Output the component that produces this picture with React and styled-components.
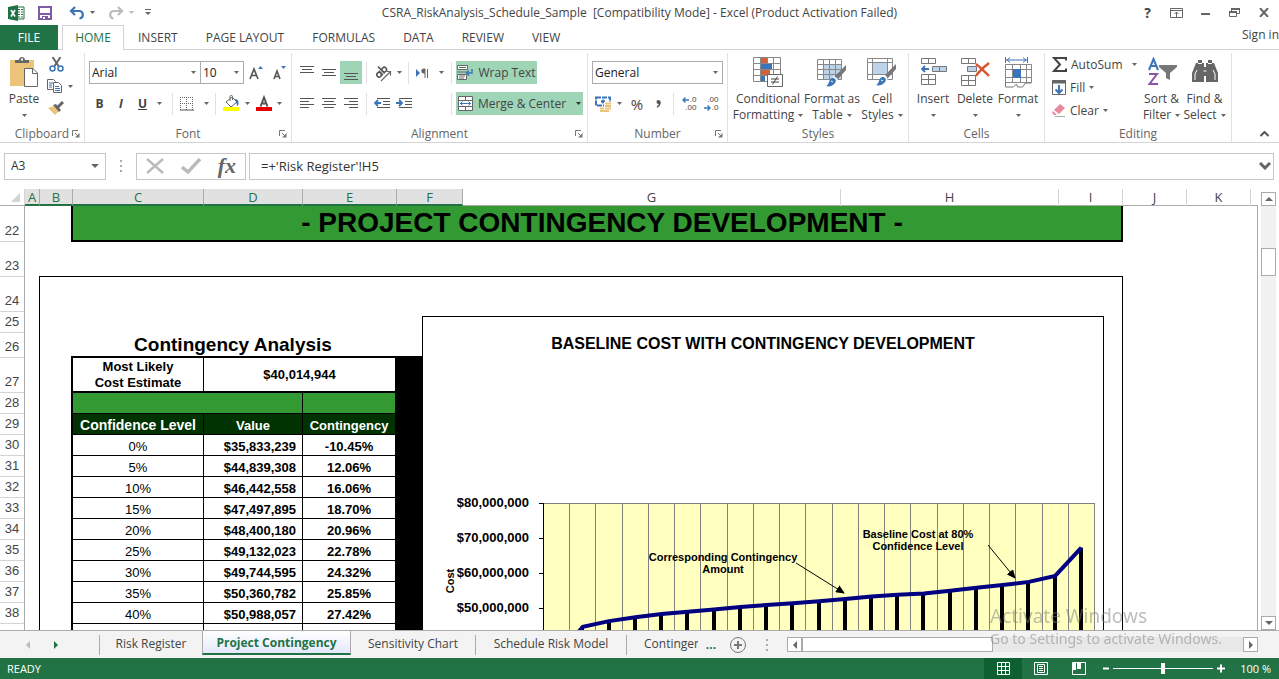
import React from 'react';
import styled, {createGlobalStyle, css} from 'styled-components';

const GlobalStyle = createGlobalStyle`
    * {
        box-sizing: border-box;
    }

    body {
        margin: 0;
        overflow: hidden;
        background: #fff;
        color: #444;
        font: 12px/16px "Open Sans", "Noto Sans", sans-serif;
    }

    button, input, select {
        margin: 0;
        padding: 0;
        border: 0;
        background: none;
        color: inherit;
        font: inherit;
    }

    svg {
        display: block;
        flex: none;
    }
`;

const Window = styled.div`
    display: flex;
    flex-direction: column;
    height: 100vh;
`;

/* ---------- title bar and tabs ---------- */

const TitleBar = styled.header`
    display: grid;
    grid-template-columns: 1fr auto 1fr;
    align-items: center;
    height: 25px;
`;

const QuickAccess = styled.div`
    display: flex;
    align-items: center;
    gap: 5px;
    padding-left: 8px;
`;

const Title = styled.h1`
    margin: 0;
    font-size: 12px;
    font-weight: normal;
    white-space: pre;
`;

const WindowButtons = styled.div`
    display: flex;
    justify-content: flex-end;
    padding-right: 1px;
`;

const ToolButton = styled.button`
    display: flex;
    align-items: center;
    justify-content: center;
    gap: 5px;
    flex: none;
    width: ${p => p.$width ? `${p.$width}px` : 'auto'};
    height: ${p => p.$short ? 22 : 23}px;
    background: ${p => p.$active ? '#9fd5b7' : 'transparent'};
    font-size: ${p => p.$size || 12}px;
    font-weight: ${p => p.$bold ? 'bold' : 'normal'};
    white-space: nowrap;
`;

const TabStrip = styled.nav`
    display: flex;
    height: 25px;
    border-bottom: 1px solid #d4d4d4;
`;

const RibbonTab = styled.button`
    height: 25px;
    padding: 0 14px;
    font-size: 12px;
    ${p => p.$file && css`
        width: 58px;
        margin-right: 4px;
        background: #217346;
        color: #fff;
    `}
    ${p => p.$active && css`
        width: 62px;
        padding: 0;
        border: 1px solid #d4d4d4;
        border-bottom: 0;
        background: #fff;
        color: #217346;
    `}
`;

const SignIn = styled.a`
    margin-left: auto;
    padding-top: 2px;
    color: #444;
    text-decoration: none;
`;

/* ---------- ribbon ---------- */

const Ribbon = styled.section`
    display: flex;
    height: 93px;
    padding-top: 3px;
    border-bottom: 1px solid #d4d4d4;
`;

const Group = styled.div`
    display: flex;
    flex-direction: column;
    flex: none;
    width: ${p => p.$width}px;
    border-right: 1px solid #e1e1e1;
`;

const GroupBody = styled.div`
    display: flex;
    flex: 1;
    align-items: flex-start;
    min-height: 0;
    padding: 0 4px;
`;

const GroupFooter = styled.div`
    display: grid;
    grid-template-columns: 12px 1fr 12px;
    align-items: center;
    height: 16px;
    color: #666;
    text-align: center;
`;

const Rows = styled.div`
    display: flex;
    flex-direction: column;
    gap: 8px;
    padding-top: 8px;
`;

const Row = styled.div`
    display: flex;
    align-items: center;
    height: 23px;
`;

const Divider = styled.span`
    width: 1px;
    height: 22px;
    margin: 0 4px;
    background: #e1e1e1;
`;

const Spacer = styled.span`
    width: ${p => p.$width}px;
`;

const Filler = styled.span`
    flex: 1;
`;

const Combo = styled.label`
    display: flex;
    align-items: center;
    width: ${p => p.$width}px;
    height: 23px;
    padding-right: 4px;
    border: 1px solid #ababab;
    color: #222;

    & + & {
        margin-left: -1px;
    }

    select {
        flex: 1;
        min-width: 0;
        padding-left: 2px;
        appearance: none;
    }
`;

const BigButton = styled.button`
    display: flex;
    flex-direction: column;
    align-items: center;
    flex: none;
    width: ${p => p.$width}px;
    padding-top: 4px;
    text-align: center;
    white-space: nowrap;
`;

const IconSlot = styled.span`
    display: flex;
    justify-content: center;
    height: 34px;
`;

const LabelLine = styled.span`
    display: flex;
    align-items: center;
    justify-content: center;
    gap: 4px;
    min-height: 16px;
`;

const SmallColumn = styled.div`
    display: flex;
    flex-direction: column;
    align-items: flex-start;
`;

const EditList = styled.div`
    display: flex;
    flex-direction: column;
    width: 88px;
    padding-left: 3px;
`;

const EditButton = styled.button`
    display: flex;
    align-items: center;
    gap: 4px;
    height: 23px;

    svg:nth-of-type(2) {
        margin-left: ${p => p.$split ? 'auto' : '0'};
    }
`;

const Collapse = styled.button`
    align-self: flex-end;
    margin: 0 10px 5px auto;
`;

/* ---------- formula bar ---------- */

const FormulaBar = styled.section`
    display: flex;
    align-items: center;
    height: 46px;
    padding: 0 5px 0 4px;
    color: #333;
`;

const NameBox = styled.label`
    display: flex;
    align-items: center;
    width: 102px;
    height: 27px;
    padding: 0 6px;
    border: 1px solid #c6c6c6;

    input {
        flex: 1;
        min-width: 0;
    }
`;

const FormulaButtons = styled.div`
    display: flex;
    align-items: center;
    justify-content: space-between;
    width: 110px;
    height: 27px;
    margin-right: 3px;
    padding: 0 9px;
    border: 1px solid #c6c6c6;
`;

const FormulaField = styled.label`
    display: flex;
    align-items: center;
    flex: 1;
    height: 27px;
    padding: 0 2px 0 11px;
    border: 1px solid #c6c6c6;
    font-size: 13px;

    input {
        flex: 1;
    }
`;

const Grip = styled.span`
    display: flex;
    flex-direction: column;
    align-items: center;
    gap: 3px;
    width: ${p => p.$width}px;

    i {
        width: 2px;
        height: 2px;
        background: #ababab;
    }
`;

/* ---------- worksheet ---------- */

const Workspace = styled.main`
    display: flex;
    flex: 1;
    min-height: 0;
`;

const SheetArea = styled.div`
    display: flex;
    flex-direction: column;
    flex: 1;
    min-width: 0;
    overflow: hidden;
`;

const ColumnHeaders = styled.div`
    display: flex;
    flex: none;
    height: 17px;
    border-bottom: 1px solid #ababab;
`;

const Corner = styled.div`
    display: flex;
    align-items: flex-end;
    justify-content: flex-end;
    flex: none;
    width: 25px;
    padding: 0 4px 3px 0;
    border-right: 1px solid #d4d4d4;
`;

const ColumnHeader = styled.div`
    flex: none;
    width: ${p => p.$width}px;
    height: 17px;
    border-right: 1px solid #d4d4d4;
    font-size: 13px;
    line-height: 16px;
    text-align: center;
    ${p => p.$selected && css`
        border-right-color: #ababab;
        border-bottom: 2px solid #217346;
        background: #e1e1e1;
        color: #217346;
    `}
`;

const SheetBody = styled.div`
    display: flex;
    flex: 1;
    min-height: 0;
    overflow: hidden;
    border-right: 1px solid #ababab;
`;

const RowHeaders = styled.div`
    flex: none;
    width: 25px;
    border-right: 1px solid #ababab;
`;

const RowHeader = styled.div`
    display: flex;
    align-items: flex-end;
    justify-content: center;
    height: ${p => p.$height}px;
    padding-bottom: 2px;
    border-bottom: 1px solid #d4d4d4;
    font-family: "Liberation Sans", Arial, sans-serif;
    font-size: 13px;
    line-height: 16px;
`;

const Cells = styled.div`
    flex: 1;
    min-width: 0;
    color: #000;
    font-family: "Liberation Sans", Arial, sans-serif;
`;

const Banner = styled.h2`
    width: 1052px;
    height: 36px;
    margin: 0 0 34px 46px;
    padding-left: 10px;
    border: 2px solid #000;
    border-top: 0;
    background: #339933;
    font-size: 28px;
    line-height: 34px;
    text-align: center;
`;

const Panel = styled.div`
    display: flex;
    align-items: flex-start;
    width: 1084px;
    height: 400px;
    margin-left: 14px;
    padding-left: 31px;
    border: 1px solid #000;
`;

const Analysis = styled.div`
    width: 324px;
    padding-top: 57px;

    h3 {
        margin: 0;
        font-size: 19px;
        line-height: 22px;
        text-align: center;
    }
`;

const DataTable = styled.table`
    width: 324px;
    border: solid #000;
    border-width: 2px 0 0 2px;
    border-spacing: 0;
    table-layout: fixed;
    font-size: 13px;
    line-height: 17px;

    th, td {
        height: 21px;
        padding: 2px 0 0;
        border-bottom: 1px solid #000;
        text-align: center;
        font-weight: bold;
    }

    th:not(:last-child), td:not(:last-child) {
        border-right: 1px solid #000;
    }
`;

const EstimateRow = styled.tr`
    line-height: 16px;

    th, td {
        height: 35px;
        padding: 0;
        border-bottom-width: 2px;
    }
`;

const GreenRow = styled.tr`
    background: #339933;
`;

const HeadRow = styled.tr`
    background: #003300;
    color: #fff;

    th:first-child {
        font-size: 14px;
    }
`;

const DataRow = styled.tr`
    td:first-child {
        font-weight: normal;
    }

    td:nth-child(2) {
        padding-right: 6px;
        text-align: right;
    }
`;

const BlackColumn = styled.div`
    width: 27px;
    height: 320px;
    margin-top: 79px;
    background: #000;
`;

const ChartFrame = styled.figure`
    width: 682px;
    height: 361px;
    margin: 39px 0 0;
    border: 1px solid #000;
`;

const ScrollColumn = styled.div`
    display: flex;
    flex-direction: column;
    width: 15px;
    margin: 3px 3px 0;
    background: #f1f1f1;
`;

const ScrollButton = styled.button`
    display: flex;
    align-items: center;
    justify-content: center;
    flex: none;
    width: 15px;
    height: 14px;
    border: 1px solid #ababab;
    background: #fff;
`;

const VerticalThumb = styled.div`
    width: 15px;
    height: 28px;
    margin: 42px 0 auto;
    border: 1px solid #ababab;
    background: #fff;
`;

/* ---------- sheet tabs and status bar ---------- */

const SheetTabs = styled.nav`
    display: flex;
    align-items: center;
    height: 28px;
    padding-right: 21px;
    border-top: 1px solid #ababab;
    background: #f3f3f3;
`;

const TabArrows = styled.div`
    display: flex;
    justify-content: space-between;
    width: 99px;
    padding: 0 39px 0 24px;
`;

const SheetTab = styled.button`
    flex: none;
    width: ${p => p.$width}px;
    height: 20px;
    overflow: hidden;
    padding-bottom: 2px;
    border-left: ${p => p.$line ? '1px solid #ababab' : '0'};
    white-space: nowrap;
    ${p => p.$active && css`
        align-self: flex-start;
        height: 24px;
        padding: 2px 0 0;
        border: solid #ababab;
        border-width: 0 1px;
        border-bottom: 2px solid #217346;
        background: linear-gradient(#fff, #e4e8fb);
        color: #217346;
        font-weight: bold;
    `}
    ${p => p.$clipped && css`
        padding-left: 17px;
        text-align: left;
    `}
`;

const MoreTabs = styled.button`
    width: 26px;
    color: #217346;
    font-weight: bold;
`;

const HorizontalScroll = styled.div`
    display: flex;
    flex: 1;
    height: 15px;
    background: #e8e8e8;

    ${ScrollButton} {
        height: 15px;
    }
`;

const HorizontalThumb = styled.div`
    width: 191px;
    margin-right: auto;
    border: 1px solid #ababab;
    background: #fff;
`;

const StatusBar = styled.footer`
    display: flex;
    align-items: center;
    height: 21px;
    padding: 0 8px 0 7px;
    background: #217346;
    color: #fff;
    font-size: 11px;
`;

const ViewButton = styled.button`
    display: flex;
    align-items: center;
    justify-content: center;
    width: 38px;
    height: 21px;
    background: ${p => p.$active ? '#0e5f32' : 'transparent'};
`;

const ZoomSlider = styled.input`
    width: 100px;
    height: 16px;
    appearance: none;

    &::-webkit-slider-runnable-track {
        height: 1px;
        background: #fff;
    }

    &::-webkit-slider-thumb {
        width: 4px;
        height: 11px;
        margin-top: -5px;
        appearance: none;
        background: #fff;
    }
`;

const ZoomValue = styled.span`
    margin-left: 12px;
    white-space: nowrap;
`;

const ActivateNotice = styled.aside`
    position: fixed;
    left: calc(100% - 289px);
    bottom: 31px;
    color: rgba(125, 125, 125, 0.5);
    font-family: "Noto Sans", sans-serif;
    font-size: 14px;
    line-height: 18px;
    white-space: nowrap;
    pointer-events: none;

    strong {
        display: block;
        font-size: 19px;
        font-weight: normal;
        line-height: 28px;
    }
`;

/* ---------- icons ---------- */

const Icon = ({w = 16, h = 16, children}) => (
    <svg width={w} height={h} viewBox={`0 0 ${w} ${h}`} fill="none" aria-hidden="true">{children}</svg>
);

const Caret = ({color = '#666'}) => (
    <Icon w={5} h={3}><path d="M0 0h5L2.500 3z" fill={color}/></Icon>
);

const TriangleIcon = ({dir, color = '#666'}) => {
    const paths = {
        left: 'M6 0v8L2 4z',
        right: 'M2 0v8l4-4z',
        up: 'M0 6h8L4 2z',
        down: 'M0 2h8L4 6z',
    };
    return <Icon w={8} h={8}><path d={paths[dir]} fill={color}/></Icon>;
};

const ExcelIcon = () => (
    <Icon w={17} h={16}>
        <path d="M9 2h7v12H9z" fill="#fff" stroke="#217346"/>
        <path d="M10 4.500h2M13 4.500h2M10 7h2M13 7h2M10 9.500h2M13 9.500h2M10 12h2M13 12h2" stroke="#217346"/>
        <path d="M0 2l10-2v16L0 14z" fill="#217346"/>
        <path d="M3 5l4 6.500M7 5l-4 6.500" stroke="#fff" strokeWidth="1.600"/>
    </Icon>
);

const SaveIcon = () => (
    <Icon w={14} h={14}>
        <path d="M1 1h12v12H1z" stroke="#7d5ba6" strokeWidth="2"/>
        <path d="M2 7h10v2H2zM4 10h6v4H4z" fill="#7d5ba6"/>
        <path d="M5 11h2v2H5z" fill="#fff"/>
    </Icon>
);

const UndoIcon = ({color = '#3b74b9', flip}) => (
    <Icon w={16} h={14}>
        <g transform={flip ? 'matrix(-1 0 0 1 16 0)' : undefined} stroke={color} strokeWidth="2.200">
            <path d="M6 1L2 5l4 4"/>
            <path d="M2.500 5H10c5 0 5 7 .5 7.500"/>
        </g>
    </Icon>
);

const CustomizeIcon = () => (
    <Icon w={6} h={7}><path d="M0 .5h6" stroke="#666"/><path d="M0 3h6L3 6z" fill="#666"/></Icon>
);

const RibbonDisplayIcon = () => (
    <Icon w={13} h={10}>
        <path d="M.5.5h12v9H.5zM.5 2.500h12" stroke="#666"/>
        <path d="M6.500 9V4M4.500 6l2-2 2 2" stroke="#666"/>
    </Icon>
);

const MinimizeIcon = () => <Icon w={9} h={9}><path d="M0 6h9" stroke="#666" strokeWidth="2"/></Icon>;

const RestoreIcon = () => (
    <Icon w={11} h={10}>
        <path d="M2.500 3V.5h8v5H8" stroke="#666"/><path d="M2 1h9" stroke="#666" strokeWidth="2"/>
        <path d="M.5 3.500h7v5h-7z" stroke="#666"/><path d="M0 4h8" stroke="#666" strokeWidth="2"/>
    </Icon>
);

const CloseIcon = () => <Icon w={10} h={9}><path d="M1 0l8 9M9 0L1 9" stroke="#666" strokeWidth="2"/></Icon>;

const LaunchIcon = () => (
    <Icon w={8} h={8}>
        <path d="M.5 6V.5H6M3 3l3 3" stroke="#777"/><path d="M7.500 3v4.500H3z" fill="#777"/>
    </Icon>
);

const PasteIcon = () => (
    <Icon w={28} h={30}>
        <path d="M0 3h24v26H0z" fill="#ebc47a"/>
        <path d="M5 6V3h4c0-4 6-4 6 0h4v3z" fill="#666"/>
        <path d="M11 1.500h2v2h-2z" fill="#fff"/>
        <path d="M14.500 11.500H23l4.500 4.500v13.500h-13z" fill="#fff" stroke="#666"/>
        <path d="M22.500 12v4.500H27" stroke="#666"/>
    </Icon>
);

const CutIcon = () => (
    <Icon w={15} h={15}>
        <path d="M3.500 0l6 9M11.500 0l-6 9" stroke="#666" strokeWidth="2"/>
        <circle cx="3.500" cy="11.500" r="2.500" stroke="#3b74b9" strokeWidth="1.500"/>
        <circle cx="11.500" cy="11.500" r="2.500" stroke="#3b74b9" strokeWidth="1.500"/>
    </Icon>
);

const CopyIcon = () => (
    <Icon w={16} h={14}>
        <path d="M.5.500h6l2 2v8h-8z" fill="#fff" stroke="#666"/>
        <path d="M2 4h4M2 6h3M2 8h3" stroke="#3b74b9"/>
        <path d="M6.500 3.500h5l3 3v7h-8z" fill="#fff" stroke="#666"/>
        <path d="M8 7.500h4M8 9.500h5M8 11.500h5" stroke="#3b74b9"/>
    </Icon>
);

const PainterIcon = () => (
    <Icon w={16} h={14}>
        <path d="M0 7l6-2 5 5-4 4z" fill="#ebc47a"/>
        <path d="M5 4l3-1 5 6-2 2z" fill="#666"/>
        <path d="M9.500 6.500L15 1" stroke="#666" strokeWidth="3"/>
    </Icon>
);

const BordersIcon = () => (
    <Icon w={14} h={14}>
        <path d="M0 .5h14M0 6.500h14M.5 0v13M6.500 0v13M12.500 0v13" stroke="#666" strokeDasharray="1 1"/>
        <path d="M0 13h14" stroke="#555"/>
    </Icon>
);

const FillColorIcon = () => (
    <Icon w={17} h={17}>
        <path d="M3 7l6-5 5 5-6 5z" fill="#fff" stroke="#666"/>
        <path d="M7 6V1.500C7 0 9.500 0 9.500 1.500V5" stroke="#666"/>
        <path d="M12 4c4 0 4 4 3 7-2-1-1-4-3-5z" fill="#3b74b9"/>
        <path d="M0 12h16v4H0z" fill="#ffff00"/>
    </Icon>
);

const FontColorIcon = () => (
    <Icon w={16} h={17}>
        <path d="M4.500 11.500L8 2.500l3.500 9M5.500 8.500h5" stroke="#555" strokeWidth="2"/>
        <path d="M0 12h16v4H0z" fill="#e60000"/>
    </Icon>
);

const LetterSizeIcon = ({grow}) => (
    <Icon w={14} h={16}>
        <path d={grow ? 'M1 14L5 4l4 10M2.500 10.500h5' : 'M2 14l3-8 3 8M3 11.500h4'} stroke="#555" strokeWidth="1.600"/>
        <path d={grow ? 'M9 4h5l-2.500-3z' : 'M9 1h5l-2.500 3z'} fill="#3b74b9"/>
    </Icon>
);

const LinesIcon = ({lines}) => (
    <Icon w={14} h={14}>
        {lines.map(([x, y, w]) => <path key={y} d={`M${x} ${y}.5h${w}`} stroke="#555"/>)}
    </Icon>
);

const vertical = top => [[0, top, 14], [2, top + 3, 10], [0, top + 6, 14]];

const ALIGN_LEFT = [[0, 1, 14], [0, 4, 9], [0, 7, 14], [0, 10, 9]];
const ALIGN_CENTER = [[0, 1, 14], [2, 4, 10], [0, 7, 14], [2, 10, 10]];
const ALIGN_RIGHT = [[0, 1, 14], [5, 4, 9], [0, 7, 14], [5, 10, 9]];

const OrientationIcon = () => (
    <Icon w={18} h={18}>
        <g transform="rotate(-45 9 9)" stroke="#555" strokeWidth="1.500">
            <circle cx="5" cy="7.500" r="2.300"/>
            <path d="M7.500 4.500v6M10 1v9.500"/>
            <circle cx="12.300" cy="7.500" r="2.300"/>
        </g>
        <path d="M7 17l9-9M12.500 7.500H16.500v4" stroke="#666" strokeWidth="1.200"/>
    </Icon>
);

const ParagraphIcon = () => (
    <Icon w={13} h={12}>
        <path d="M0 2l4 4-4 4z" fill="#3b74b9"/>
        <path d="M9 2v9M11.500 2v9" stroke="#666"/>
        <path d="M13 1.500H8C4.500 1.500 4.500 6.500 8 6.500h1v-5z" fill="#666"/>
    </Icon>
);

const IndentIcon = ({out}) => (
    <Icon w={17} h={13}>
        <path d="M3 1.500h13M9 4.500h7M9 7.500h7M3 10.500h13" stroke="#555"/>
        <path d={out ? 'M7 6H1M4 3L1 6l3 3' : 'M0 6h6M3 3l3 3-3 3'} stroke="#3b74b9" strokeWidth="1.800"/>
    </Icon>
);

const WrapIcon = () => (
    <Icon w={16} h={15}>
        <path d="M.5.5h10v4H.5zM.5 9.500h9v5h-9z" fill="#fff" stroke="#666"/>
        <path d="M2 2.500h7M2 11h6M2 13h5M0 7h10" stroke="#666"/>
        <path d="M15 4v4h-5M12 5.500L9.500 8l2.500 2.500" stroke="#3b74b9" strokeWidth="1.500"/>
    </Icon>
);

const MergeIcon = () => (
    <Icon w={15} h={15}>
        <path d="M.5.500h14v14H.5z" fill="#fff"/>
        <path d="M.5.500h14v14H.5zM.5 4.500h14M.5 10.500h14M7.500 0v4M7.500 11v4" stroke="#666"/>
        <path d="M2 7.500h11M4.500 5.500l-2 2 2 2M10.500 5.500l2 2-2 2" stroke="#3b74b9"/>
    </Icon>
);

const CurrencyIcon = () => (
    <Icon w={17} h={16}>
        <path d="M1 1.500h14v8H1z" stroke="#3b74b9" strokeWidth="2" strokeDasharray="5 1"/>
        <circle cx="8" cy="5.500" r="2" fill="#3b74b9"/>
        <path d="M9 6h7v9H5v-4h4z" fill="#fff"/>
        <path d="M10 7.500h6M10 10h6M10 12.500h6M5 12.500h4M5 15h9" stroke="#ebc47a" strokeWidth="1.800"/>
    </Icon>
);

const CommaIcon = () => (
    <Icon w={6} h={10}>
        <circle cx="2.500" cy="3" r="2" fill="#555"/><path d="M4 3c0 2-1 4-3 5" stroke="#555" strokeWidth="1.500"/>
    </Icon>
);

// digits are stacked so that the longer run is right aligned with the shorter one
const Digits = styled.span`
    display: flex;
    flex-direction: column;
    align-items: flex-end;
    font-family: "Liberation Sans", Arial, sans-serif;
    font-size: 8px;
    line-height: 8px;

    span {
        display: flex;
        align-items: center;
        gap: 1px;
    }
`;

const DecimalIcon = ({increase}) => {
    const arrow = (
        <Icon w={7} h={6}>
            <path d={increase ? 'M7 3H1M3.500.5L1 3l2.500 2.500' : 'M0 3h6M3.500.5L6 3 3.500 5.500'} stroke="#3b74b9" strokeWidth="1.400"/>
        </Icon>
    );
    return (
        <Digits>
            <span>{increase && arrow}{increase ? '.0' : '.00'}</span>
            <span>{!increase && arrow}{increase ? '.00' : '.0'}</span>
        </Digits>
    );
};

const Brush = ({x, y}) => (
    <g transform={`translate(${x} ${y})`}>
        <path d="M20 0v5l-8 9-3-3z" fill="#777"/>
        <path d="M8 11l4 4-2 2-4-3z" fill="#fff"/>
        <path d="M6 13c3 0 5 2 3 5-2 3-6 4-9 3 4-2 2-6 6-8z" fill="#3b74b9"/>
        <path d="M5 16l2 1" stroke="#fff"/>
    </g>
);

const ConditionalIcon = () => (
    <Icon w={30} h={31}>
        <path d="M.5.5h27v24H.5zM.5 6.500h27M.5 12.500h27M.5 18.500h27M7.500 0v25M14.500 0v25M20.500 0v25" fill="#fff" stroke="#888"/>
        <path d="M8 1h6v5H8zM8 13h9v5H8z" fill="#d2603c"/>
        <path d="M8 7h11v5H8zM8 19h4v5H8z" fill="#3b74b9"/>
        <path d="M14.500 17.500h15v12h-15z" fill="#fff" stroke="#666"/>
        <path d="M18 22h8M18 25h8M24.500 19.500l-5 8" stroke="#444"/>
    </Icon>
);

const FormatTableIcon = () => (
    <Icon w={30} h={31}>
        <path d="M.5 2.500h24v20H.5z" fill="#fff"/>
        <path d="M7 8h18v15H7z" fill="#bdd3ea"/>
        <path d="M.5 2.500h24v20H.5zM.5 7.500h24M.5 12.500h24M.5 17.500h24M6.500 2v21M12.500 2v21M18.500 2v21" stroke="#888"/>
        <Brush x={9} y={8}/>
    </Icon>
);

const CellStylesIcon = () => (
    <Icon w={30} h={31}>
        <path d="M.5 1.500h25v21H.5zM.5 5.500h25M.5 17.500h25M5.500 1v22M20.500 1v22" fill="#fff" stroke="#888"/>
        <path d="M6 6h14v11H6z" fill="#bdd3ea"/>
        <Brush x={9} y={7}/>
    </Icon>
);

const InsertCellsIcon = () => (
    <Icon w={27} h={30}>
        <path d="M1.500 1.500h14v5h-14zM8.500 1v6M1.500 17.500h14v10h-14zM1.500 22.500h14M8.500 17v11" stroke="#777"/>
        <path d="M12.500 9.500h14v5h-14zM19.500 9v6" fill="#bdd3ea" stroke="#777"/>
        <path d="M9 12H2M5 9l-3 3 3 3" stroke="#3b74b9" strokeWidth="1.800"/>
    </Icon>
);

const DeleteCellsIcon = () => (
    <Icon w={30} h={30}>
        <path d="M1.500 1.500h14v5h-14zM8.500 1v6M1.500 18.500h14v10h-14zM1.500 23.500h14M8.500 18v11" stroke="#777"/>
        <path d="M7.500 9.500h9v5h-9z" fill="#bdd3ea" stroke="#777"/>
        <path d="M16 7c4 3 9 8 13 12M29 6c-5 4-10 8-13 13" stroke="#d9532c" strokeWidth="2.400"/>
    </Icon>
);

const FormatCellsIcon = () => (
    <Icon w={29} h={31}>
        <path d="M1.500 0v6M23.500 0v6M2 3h21M6 .5L3 3l3 2.500M19 .5L22 3l-3 2.500" stroke="#3b74b9"/>
        <path d="M1.500 7.500h26v18h-26zM1.500 12.500h26M1.500 20.500h26M8.500 7v19M16.500 7v19M22.500 7v19" stroke="#888"/>
        <path d="M9 12h8v9H9z" fill="#3b74b9"/>
        <path d="M1.500 25v5h8l3-3 1 3h5l3-4h6" stroke="#777"/>
    </Icon>
);

const SumIcon = () => (
    <Icon w={15} h={15}><path d="M14 3.500V1H2l6 6.500L2 14h12v-2.500" stroke="#444" strokeWidth="2"/></Icon>
);

const FillIcon = () => (
    <Icon w={14} h={15}>
        <path d="M.5.5h13v14H.5z" stroke="#666"/><path d="M0 2h14" stroke="#666" strokeWidth="3"/>
        <path d="M7 5v8M3.500 9.500L7 13l3.500-3.500" stroke="#3b74b9" strokeWidth="2"/>
    </Icon>
);

const EraserIcon = () => (
    <Icon w={14} h={13}>
        <path d="M8 0l5 4-6 6-5-4z" fill="#e78a9d"/><path d="M1 7l4 4H2L0 9z" fill="#e78a9d"/>
        <path d="M3 12.500h10" stroke="#aaa"/>
    </Icon>
);

const SortIcon = () => (
    <Icon w={30} h={30}>
        <path d="M2 13L6.500 2 11 13M3.500 9h6" stroke="#3b74b9" strokeWidth="2"/>
        <path d="M2 17h8L2.500 27H11" stroke="#8a55a8" strokeWidth="2"/>
        <path d="M12 8h18v2l-7 6v7l-4-2v-5l-7-6z" fill="#777"/>
    </Icon>
);

const FindIcon = () => (
    <Icon w={26} h={27}>
        <path d="M6 3h4v3h2v19H0v-9L4 6h2zM16 3h4v3h2l4 10v9H14V6h2z" fill="#666"/>
        <path d="M10 10h6v9h-6z" fill="#666"/>
        <path d="M3 23v-6l2-4M23 23v-6l-2-4M6 6.500h4M16 6.500h4M11.500 14h3" stroke="#fff"/>
    </Icon>
);

const CancelIcon = () => <Icon w={18} h={16}><path d="M1 1l16 14M17 1L1 15" stroke="#bbb" strokeWidth="2.400"/></Icon>;
const CheckIcon = () => <Icon w={20} h={16}><path d="M1 9l6 5L19 1" stroke="#bbb" strokeWidth="3.400"/></Icon>;

const Fx = styled.span`
    color: #666;
    font: italic bold 22px/24px "Liberation Serif", serif;
`;

const AddSheetIcon = () => (
    <Icon w={16} h={16}><circle cx="8" cy="8" r="7.500" stroke="#777"/><path d="M8 4v8M4 8h8" stroke="#777" strokeWidth="2"/></Icon>
);

/* ---------- chart ---------- */

const CURVE = [35.8, 44.8, 46.4, 47.5, 48.4, 49.1, 49.7, 50.4, 51, 51.5, 52.1, 52.7, 53.4, 53.9, 54.3, 55.1, 55.9, 56.7, 57.6, 59.3, 67.4];
const AXIS = [80, 70, 60, 50];
const PLOT = {left: 120.5, top: 186.5, width: 551, height: 180};

const xAt = i => PLOT.left + PLOT.width / CURVE.length * i;
const yAt = value => PLOT.top + (80 - value) * 3.5;

const ChartText = styled.text`
    fill: #000;
    font-size: ${p => p.$size}px;
    font-weight: bold;
    text-anchor: ${p => p.$anchor || 'middle'};
`;

const ContingencyChart = () => (
    <ChartFrame>
        <svg width="680" height="359" viewBox="0 0 680 359" role="img" aria-label="Baseline cost with contingency development">
            <defs>
                <marker id="arrow" markerWidth="9" markerHeight="8" refX="8" refY="4" orient="auto" markerUnits="userSpaceOnUse">
                    <path d="M0 0l9 4-9 4z" fill="#000"/>
                </marker>
            </defs>
            <ChartText x="340" y="32" $size={16}>BASELINE COST WITH CONTINGENCY DEVELOPMENT</ChartText>
            <rect x={PLOT.left} y={PLOT.top} width={PLOT.width} height={PLOT.height} fill="#ffffc0" stroke="#808080"/>
            {CURVE.map((v, i) => (
                <path key={i} d={`M${Math.floor(xAt(i)) + 0.5} ${PLOT.top}v${PLOT.height}`}
                      stroke={i === 0 ? '#000' : '#808080'}/>
            ))}
            {AXIS.map(v => (
                <g key={v}>
                    <path d={`M116 ${yAt(v)}h5`} stroke="#000"/>
                    <ChartText x="106" y={yAt(v) + 3.5} $size={13} $anchor="end">{`$${v},000,000`}</ChartText>
                </g>
            ))}
            {CURVE.map((v, i) => (
                <path key={i} d={`M${Math.floor(xAt(i + 0.5))} ${yAt(v)}V359`} stroke="#000" strokeWidth="4"/>
            ))}
            <polyline points={CURVE.map((v, i) => `${xAt(i + 0.5)},${yAt(v)}`).join(' ')}
                      stroke="#000080" strokeWidth="4" fill="none"/>
            <ChartText transform="translate(31 264) rotate(-90)" $size={11}>Cost</ChartText>
            <ChartText x="300" y="244" $size={11}>Corresponding Contingency</ChartText>
            <ChartText x="300" y="256" $size={11}>Amount</ChartText>
            <ChartText x="495" y="221" $size={11}>Baseline Cost at 80%</ChartText>
            <ChartText x="495" y="233" $size={11}>Confidence Level</ChartText>
            <path d="M373 246l48 30" stroke="#000" markerEnd="url(#arrow)"/>
            <path d="M565 228l27 33" stroke="#000" markerEnd="url(#arrow)"/>
        </svg>
    </ChartFrame>
);

/* ---------- data ---------- */

const RIBBON_TABS = ['FILE', 'HOME', 'INSERT', 'PAGE LAYOUT', 'FORMULAS', 'DATA', 'REVIEW', 'VIEW'];

const COLUMNS = [
    ['A', 15], ['B', 33], ['C', 131], ['D', 99], ['E', 94], ['F', 66],
    ['G', 378], ['H', 218], ['I', 64], ['J', 64], ['K', 64]
];

const SHEET_ROWS = [
    [22, 36], [23, 35], [24, 35], [25, 21], [26, 25], [27, 35], [28, 21], [29, 21], [30, 21],
    [31, 21], [32, 21], [33, 21], [34, 21], [35, 21], [36, 21], [37, 21], [38, 21]
];

const CONFIDENCE = [
    ['0%', '$35,833,239', '-10.45%'],
    ['5%', '$44,839,308', '12.06%'],
    ['10%', '$46,442,558', '16.06%'],
    ['15%', '$47,497,895', '18.70%'],
    ['20%', '$48,400,180', '20.96%'],
    ['25%', '$49,132,023', '22.78%'],
    ['30%', '$49,744,595', '24.32%'],
    ['35%', '$50,360,782', '25.85%'],
    ['40%', '$50,988,057', '27.42%']
];

const RibbonGroup = ({label, width, launch, children}) => (
    <Group $width={width}>
        <GroupBody>{children}</GroupBody>
        <GroupFooter>
            <span/>
            <span>{label}</span>
            {launch && <button aria-label={`${label} settings`}><LaunchIcon/></button>}
        </GroupFooter>
    </Group>
);

const Large = ({icon, lines, width}) => (
    <BigButton $width={width}>
        <IconSlot>{icon}</IconSlot>
        <LabelLine>{lines[0]}</LabelLine>
        <LabelLine>{lines[1]}<Caret/></LabelLine>
    </BigButton>
);

const Dropdown = ({label, value, width}) => (
    <Combo $width={width}>
        <select aria-label={label} defaultValue={value}><option>{value}</option></select>
        <Caret/>
    </Combo>
);

const Dots = ({width}) => <Grip $width={width}><i/><i/><i/></Grip>;

const ExcelRibbon = () => (
    <Ribbon>
        <RibbonGroup label="Clipboard" width={85} launch>
            <Large icon={<PasteIcon/>} lines={['Paste']} width={40}/>
            <SmallColumn>
                <ToolButton aria-label="Cut" $width={24} $short><CutIcon/></ToolButton>
                <ToolButton aria-label="Copy" $width={32} $short><CopyIcon/><Caret/></ToolButton>
                <ToolButton aria-label="Format Painter" $width={24} $short><PainterIcon/></ToolButton>
            </SmallColumn>
        </RibbonGroup>
        <RibbonGroup label="Font" width={207} launch>
            <Rows>
                <Row>
                    <Dropdown label="Font" value="Arial" width={112}/>
                    <Dropdown label="Font size" value="10" width={44}/>
                    <ToolButton aria-label="Increase font size" $width={24}><LetterSizeIcon grow/></ToolButton>
                    <ToolButton aria-label="Decrease font size" $width={22}><LetterSizeIcon/></ToolButton>
                </Row>
                <Row>
                    <ToolButton $width={21} $bold>B</ToolButton>
                    <ToolButton $width={22} $bold><em>I</em></ToolButton>
                    <ToolButton $width={36} $bold><u>U</u><Spacer $width={0}/><Caret/></ToolButton>
                    <Divider/>
                    <ToolButton aria-label="Borders" $width={34}><BordersIcon/><Spacer $width={0}/><Caret/></ToolButton>
                    <Divider/>
                    <ToolButton aria-label="Fill color" $width={32}><FillColorIcon/><Caret/></ToolButton>
                    <ToolButton aria-label="Font color" $width={34}><FontColorIcon/><Caret/></ToolButton>
                </Row>
            </Rows>
        </RibbonGroup>
        <RibbonGroup label="Alignment" width={296} launch>
            <Rows>
                <Row>
                    <ToolButton aria-label="Top align" $width={22}><LinesIcon lines={vertical(0)}/></ToolButton>
                    <ToolButton aria-label="Middle align" $width={22}><LinesIcon lines={vertical(3)}/></ToolButton>
                    <ToolButton aria-label="Bottom align" $width={22} $active><LinesIcon lines={vertical(7)}/></ToolButton>
                    <Divider/>
                    <ToolButton aria-label="Orientation" $width={33}><OrientationIcon/><Caret/></ToolButton>
                    <Divider/>
                    <ToolButton aria-label="Text direction" $width={34}><ParagraphIcon/><Spacer $width={0}/><Caret/></ToolButton>
                    <Divider/>
                    <ToolButton $width={81} $active><WrapIcon/>Wrap Text</ToolButton>
                </Row>
                <Row>
                    <ToolButton aria-label="Align left" $width={22}><LinesIcon lines={ALIGN_LEFT}/></ToolButton>
                    <ToolButton aria-label="Center" $width={22}><LinesIcon lines={ALIGN_CENTER}/></ToolButton>
                    <ToolButton aria-label="Align right" $width={22}><LinesIcon lines={ALIGN_RIGHT}/></ToolButton>
                    <Divider/>
                    <ToolButton aria-label="Decrease indent" $width={22}><IndentIcon out/></ToolButton>
                    <ToolButton aria-label="Increase indent" $width={22}><IndentIcon/></ToolButton>
                    <Spacer $width={32}/>
                    <Divider/>
                    <ToolButton $width={127} $active><MergeIcon/>Merge &amp; Center<Spacer $width={0}/><Caret color="#333"/></ToolButton>
                </Row>
            </Rows>
        </RibbonGroup>
        <RibbonGroup label="Number" width={140} launch>
            <Rows>
                <Row><Dropdown label="Number format" value="General" width={131}/></Row>
                <Row>
                    <ToolButton aria-label="Accounting format" $width={33}><CurrencyIcon/><Caret/></ToolButton>
                    <ToolButton $width={24} $size={15}>%</ToolButton>
                    <ToolButton aria-label="Comma style" $width={20}><CommaIcon/></ToolButton>
                    <Divider/>
                    <ToolButton aria-label="Increase decimal" $width={22}><DecimalIcon increase/></ToolButton>
                    <ToolButton aria-label="Decrease decimal" $width={22}><DecimalIcon/></ToolButton>
                </Row>
            </Rows>
        </RibbonGroup>
        <RibbonGroup label="Styles" width={181}>
            <Large icon={<ConditionalIcon/>} lines={['Conditional', 'Formatting']} width={72}/>
            <Large icon={<FormatTableIcon/>} lines={['Format as', 'Table']} width={56}/>
            <Large icon={<CellStylesIcon/>} lines={['Cell', 'Styles']} width={44}/>
        </RibbonGroup>
        <RibbonGroup label="Cells" width={136}>
            <Large icon={<InsertCellsIcon/>} lines={['Insert']} width={40}/>
            <Large icon={<DeleteCellsIcon/>} lines={['Delete']} width={44}/>
            <Large icon={<FormatCellsIcon/>} lines={['Format']} width={42}/>
        </RibbonGroup>
        <RibbonGroup label="Editing" width={187}>
            <EditList>
                <EditButton $split><SumIcon/>AutoSum<Caret/></EditButton>
                <EditButton><FillIcon/>Fill<Caret/></EditButton>
                <EditButton><EraserIcon/>Clear<Caret/></EditButton>
            </EditList>
            <Spacer $width={3}/>
            <Large icon={<SortIcon/>} lines={['Sort &', 'Filter']} width={43}/>
            <Large icon={<FindIcon/>} lines={['Find &', 'Select']} width={43}/>
        </RibbonGroup>
        <Collapse aria-label="Collapse the ribbon">
            <Icon w={9} h={6}><path d="M.5 5l4-4 4 4" stroke="#555" strokeWidth="2"/></Icon>
        </Collapse>
    </Ribbon>
);

const Worksheet = () => (
    <SheetArea>
        <ColumnHeaders>
            <Corner><Icon w={9} h={9}><path d="M9 0v9H0z" fill="#d4d4d4"/></Icon></Corner>
            {COLUMNS.map(([name, width], i) => (
                <ColumnHeader key={name} $width={width} $selected={i < 6}>{name}</ColumnHeader>
            ))}
        </ColumnHeaders>
        <SheetBody>
            <RowHeaders>
                {SHEET_ROWS.map(([n, height]) => <RowHeader key={n} $height={height}>{n}</RowHeader>)}
            </RowHeaders>
            <Cells>
                <Banner>- PROJECT CONTINGENCY DEVELOPMENT -</Banner>
                <Panel>
                    <Analysis>
                        <h3>Contingency Analysis</h3>
                        <DataTable>
                            <colgroup>
                                <col width="131"/>
                                <col width="99"/>
                                <col width="92"/>
                            </colgroup>
                            <tbody>
                                <EstimateRow>
                                    <th>Most Likely<br/>Cost Estimate</th>
                                    <td colSpan="2">$40,014,944</td>
                                </EstimateRow>
                                <GreenRow><td colSpan="2"/><td/></GreenRow>
                                <HeadRow><th>Confidence Level</th><th>Value</th><th>Contingency</th></HeadRow>
                                {CONFIDENCE.map(([level, value, contingency]) => (
                                    <DataRow key={level}><td>{level}</td><td>{value}</td><td>{contingency}</td></DataRow>
                                ))}
                                <DataRow><td/><td/><td/></DataRow>
                            </tbody>
                        </DataTable>
                    </Analysis>
                    <BlackColumn/>
                    <ContingencyChart/>
                </Panel>
            </Cells>
        </SheetBody>
    </SheetArea>
);

const App = () => (
    <Window>
        <GlobalStyle/>
        <TitleBar>
            <QuickAccess>
                <ExcelIcon/>
                <ToolButton aria-label="Save" $width={30}><SaveIcon/></ToolButton>
                <ToolButton aria-label="Undo" $width={34}><UndoIcon/><Caret/></ToolButton>
                <ToolButton aria-label="Redo" $width={34}><UndoIcon color="#bbb" flip/><Caret color="#bbb"/></ToolButton>
                <ToolButton aria-label="Customize toolbar" $width={10}><CustomizeIcon/></ToolButton>
            </QuickAccess>
            <Title>CSRA_RiskAnalysis_Schedule_Sample  [Compatibility Mode] - Excel (Product Activation Failed)</Title>
            <WindowButtons>
                <ToolButton aria-label="Help" $width={29} $size={14} $bold>?</ToolButton>
                <ToolButton aria-label="Ribbon display" $width={29}><RibbonDisplayIcon/></ToolButton>
                <ToolButton aria-label="Minimize" $width={29}><MinimizeIcon/></ToolButton>
                <ToolButton aria-label="Restore" $width={29}><RestoreIcon/></ToolButton>
                <ToolButton aria-label="Close" $width={29}><CloseIcon/></ToolButton>
            </WindowButtons>
        </TitleBar>
        <TabStrip>
            {RIBBON_TABS.map(tab => (
                <RibbonTab key={tab} $file={tab === 'FILE'} $active={tab === 'HOME'}>{tab}</RibbonTab>
            ))}
            <SignIn href="#signin">Sign in</SignIn>
        </TabStrip>
        <ExcelRibbon/>
        <FormulaBar>
            <NameBox>
                <input aria-label="Name box" defaultValue="A3"/>
                <TriangleIcon dir="down"/>
            </NameBox>
            <Dots width={30}/>
            <FormulaButtons>
                <button aria-label="Cancel"><CancelIcon/></button>
                <button aria-label="Enter"><CheckIcon/></button>
                <button aria-label="Insert function"><Fx>fx</Fx></button>
            </FormulaButtons>
            <FormulaField>
                <input aria-label="Formula" defaultValue="=+'Risk Register'!H5"/>
                <Icon w={12} h={8}><path d="M1 1l5 5 5-5" stroke="#666" strokeWidth="3"/></Icon>
            </FormulaField>
        </FormulaBar>
        <Workspace>
            <Worksheet/>
            <ScrollColumn>
                <ScrollButton aria-label="Scroll up"><TriangleIcon dir="up"/></ScrollButton>
                <VerticalThumb/>
                <ScrollButton aria-label="Scroll down"><TriangleIcon dir="down"/></ScrollButton>
            </ScrollColumn>
        </Workspace>
        <SheetTabs>
            <TabArrows>
                <button aria-label="Previous sheet"><TriangleIcon dir="left" color="#bbb"/></button>
                <button aria-label="Next sheet"><TriangleIcon dir="right" color="#217346"/></button>
            </TabArrows>
            <SheetTab $width={103} $line>Risk Register</SheetTab>
            <SheetTab $width={149} $active>Project Contingency</SheetTab>
            <SheetTab $width={124}>Sensitivity Chart</SheetTab>
            <SheetTab $width={151} $line>Schedule Risk Model</SheetTab>
            <SheetTab $width={72} $line $clipped>Contingen</SheetTab>
            <MoreTabs aria-label="More sheets">...</MoreTabs>
            <Spacer $width={6}/>
            <button aria-label="New sheet"><AddSheetIcon/></button>
            <Dots width={41}/>
            <Spacer $width={-4}/>
            <HorizontalScroll>
                <ScrollButton aria-label="Scroll left"><TriangleIcon dir="left"/></ScrollButton>
                <HorizontalThumb/>
                <ScrollButton aria-label="Scroll right"><TriangleIcon dir="right"/></ScrollButton>
            </HorizontalScroll>
        </SheetTabs>
        <StatusBar>
            <span>READY</span>
            <Filler/>
            <ViewButton aria-label="Normal view" $active>
                <Icon w={13} h={13}><path d="M.5.5h12v12H.5zM.5 4.500h12M.5 8.500h12M4.500 0v13M8.500 0v13" stroke="#fff"/></Icon>
            </ViewButton>
            <ViewButton aria-label="Page layout view">
                <Icon w={14} h={13}><path d="M.5.5h13v12H.5zM3.500 2.500h7v8h-7zM5 4.500h4M5 6.500h4M5 8.500h4" stroke="#fff"/></Icon>
            </ViewButton>
            <ViewButton aria-label="Page break view">
                <Icon w={14} h={13}><path d="M.5.5h13v12H.5z" stroke="#fff"/><path d="M1 1h3v7H1zM5 1h4v6H5z" fill="#fff"/></Icon>
            </ViewButton>
            <button aria-label="Zoom out"><Icon w={15} h={9}><path d="M5 4.500h6" stroke="#fff" strokeWidth="2"/></Icon></button>
            <ZoomSlider type="range" aria-label="Zoom" defaultValue="50"/>
            <button aria-label="Zoom in"><Icon w={15} h={9}><path d="M4 4.500h8M8 .5v8" stroke="#fff" strokeWidth="2"/></Icon></button>
            <ZoomValue>100 %</ZoomValue>
        </StatusBar>
        <ActivateNotice>
            <strong>Activate Windows</strong>
            Go to Settings to activate Windows.
        </ActivateNotice>
    </Window>
);

export default App;
